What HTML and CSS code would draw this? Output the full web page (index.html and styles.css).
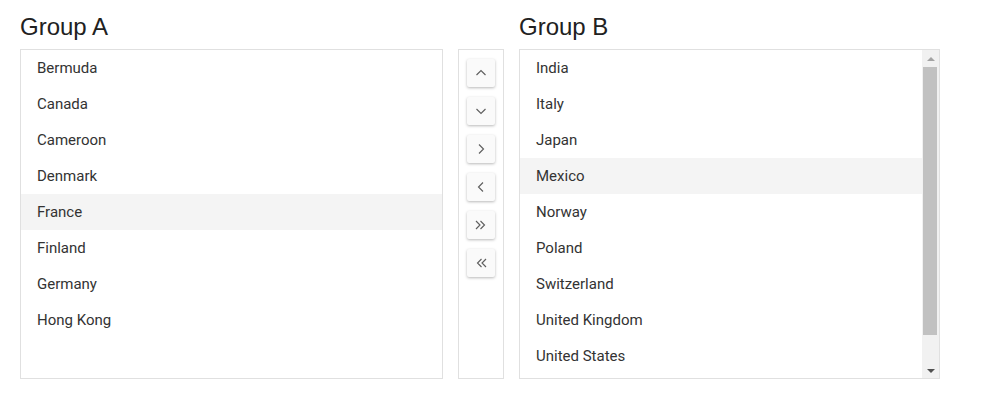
FILE: index.html
```html
<!DOCTYPE html>
<html lang="en">
<head>
  <meta charset="UTF-8">
  <title>List Box - Dual list</title>
  <link rel="stylesheet" href="styles.css">
</head>
<body>
  <div class="dual-list">
    <h4 class="group-title">Group A</h4>
    <div></div>
    <h4 class="group-title">Group B</h4>

    <!-- Group A -->
    <div class="listbox">
      <ul>
        <li>Bermuda</li>
        <li>Canada</li>
        <li>Cameroon</li>
        <li>Denmark</li>
        <li class="active">France</li>
        <li>Finland</li>
        <li>Germany</li>
        <li>Hong Kong</li>
      </ul>
    </div>

    <!-- Toolbar -->
    <div class="toolbar">
      <button class="tool-btn" title="Move Up">
        <svg viewBox="0 0 16 16"><path d="M3.5 10 8 5.5l4.5 4.5"/></svg>
      </button>
      <button class="tool-btn" title="Move Down">
        <svg viewBox="0 0 16 16"><path d="M3.5 6 8 10.5 12.5 6"/></svg>
      </button>
      <button class="tool-btn" title="Move To">
        <svg viewBox="0 0 16 16"><path d="M6 3.5l4.5 4.5L6 12.5"/></svg>
      </button>
      <button class="tool-btn" title="Move From">
        <svg viewBox="0 0 16 16"><path d="M10 3.5 5.5 8l4.5 4.5"/></svg>
      </button>
      <button class="tool-btn" title="Move All To">
        <svg viewBox="0 0 16 16"><path d="M3 4l4 4-4 4M7.5 4l4 4-4 4"/></svg>
      </button>
      <button class="tool-btn" title="Move All From">
        <svg viewBox="0 0 16 16"><path d="M8.5 4l-4 4 4 4M13 4 9 8l4 4"/></svg>
      </button>
    </div>

    <!-- Group B -->
    <div class="listbox">
      <ul>
        <li>India</li>
        <li>Italy</li>
        <li>Japan</li>
        <li class="active">Mexico</li>
        <li>Norway</li>
        <li>Poland</li>
        <li>Switzerland</li>
        <li>United Kingdom</li>
        <li>United States</li>
      </ul>
      <div class="scrollbar">
        <div class="sb-arrow up"></div>
        <div class="sb-track"><div class="sb-thumb"></div></div>
        <div class="sb-arrow down"></div>
      </div>
    </div>
  </div>
</body>
</html>
```

FILE: styles.css
```css
body {
  margin: 0;
  padding: 0;
  background-color: #fff;
  font-family: 'Roboto', 'Liberation Sans', sans-serif;
  color: #333;
}
.dual-list {
  display: grid;
  grid-template-columns: 423px 46px 421px;
  grid-template-rows: auto 330px;
  column-gap: 15px;
  padding: 0 20px;
}
.group-title {
  margin: 0;
  padding: 13px 0 9px;
  font-family: 'Liberation Sans', Arial, sans-serif;
  font-size: 24px;
  font-weight: normal;
  line-height: 27px;
  color: #212121;
}
.listbox {
  display: flex;
  border: 1px solid #e0e0e0;
  overflow: hidden;
}
.listbox ul {
  flex: 1;
  list-style: none;
  margin: 0;
  padding: 0;
}
.listbox li {
  height: 36px;
  line-height: 36px;
  padding: 0 16px;
  font-size: 15px;
  color: #333;
}
.listbox li.active {
  background-color: #f4f4f4;
}

/* fake scrollbar (Group B) */
.scrollbar {
  width: 17px;
  display: flex;
  flex-direction: column;
  background-color: #f1f1f1;
}
.sb-arrow {
  height: 17px;
  display: flex;
  align-items: center;
  justify-content: center;
}
.sb-arrow::before {
  content: '';
  width: 0;
  height: 0;
  border-left: 4px solid transparent;
  border-right: 4px solid transparent;
}
.sb-arrow.up::before {
  border-bottom: 4px solid #a3a3a3;
}
.sb-arrow.down::before {
  border-top: 4px solid #505050;
  margin-top: 3px;
}
.sb-track {
  flex: 1;
}
.sb-thumb {
  height: 268px;
  margin: 0 2px 0 1px;
  background-color: #c1c1c1;
}

.toolbar {
  display: flex;
  flex-direction: column;
  align-items: center;
  gap: 10px;
  padding-top: 9px;
  border: 1px solid #e0e0e0;
}
.tool-btn {
  width: 28px;
  height: 28px;
  padding: 0;
  display: flex;
  align-items: center;
  justify-content: center;
  background-color: #fafafa;
  border: none;
  border-radius: 2px;
  box-shadow: 0 1px 3px rgba(0, 0, 0, 0.28);
  cursor: pointer;
}
.tool-btn svg {
  width: 16px;
  height: 16px;
  fill: none;
  stroke: #5f5f5f;
  stroke-width: 1.15;
}
```
